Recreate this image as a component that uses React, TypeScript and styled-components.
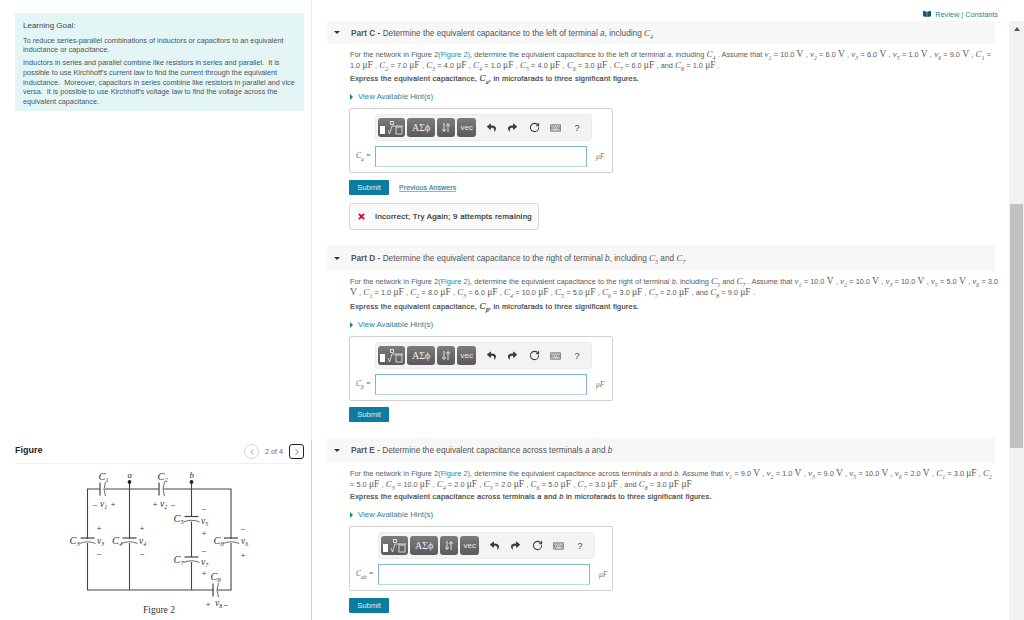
import * as React from "react";
import styled, { createGlobalStyle } from "styled-components";
import { FaBookOpen, FaKeyboard, FaReply, FaShare, FaTimes } from "react-icons/fa";
import { ChevronLeft, ChevronRight, RotateCw } from "lucide-react";

const GlobalStyle = createGlobalStyle`
  html, body {
    margin: 0;
    padding: 0;
    height: 620px;
    overflow: hidden;
    background: #fff;
    font-family: "Liberation Sans", Arial, sans-serif;
    color: #444;
  }
  * { box-sizing: border-box; }
`;

const Page = styled.div`
  display: flex;
  width: 1024px;
  height: 620px;
  overflow: hidden;
`;

const LeftColumn = styled.aside`
  display: flex;
  flex-direction: column;
  width: 312px;
  flex: none;
`;

const GoalPane = styled.div`
  flex: 1;
  padding: 13px 7px 0 15px;
  border-right: 1px solid #ececec;
`;

const GoalBox = styled.section`
  height: 98px;
  padding: 8px 8px;
  background: #e4f5f6;
  font-size: 7.28px;
  line-height: 9.7px;
  color: #4a5660;
`;

const GoalTitle = styled.div`
  color: #3c4650;
  font-size: 8px;
  margin-bottom: 5px;
`;

const GoalText = styled.p`
  margin: 0 0 3px;
  white-space: nowrap;
`;

const FigurePane = styled.div`
  height: 180px;
  padding: 0 7px 0 15px;
  border-right: 1px solid #cfd3d8;
`;

const FigureHead = styled.div`
  display: flex;
  align-items: center;
  height: 24px;
  border-bottom: 1px solid #f0f0f0;
`;

const FigureLabel = styled.div`
  flex: 1;
  margin-top: -4px;
  font-size: 9px;
  font-weight: 700;
  color: #222;
`;

const RoundButton = styled.div`
  display: flex;
  align-items: center;
  justify-content: center;
  width: 15px;
  height: 15px;
  border: 1px solid #d4d4d4;
  border-radius: 50%;
  color: #8a8a9a;
`;

const PageCount = styled.span`
  margin: 0 6px;
  font-size: 7.2px;
  color: #666;
`;

const NextButton = styled.div`
  display: flex;
  align-items: center;
  justify-content: center;
  width: 15px;
  height: 15px;
  border: 1.5px solid #222;
  border-radius: 3px;
  color: #555;
`;

const FigureBody = styled.div`
  display: flex;
  flex-direction: column;
  align-items: center;
  margin: 4px 0 0 -1px;
`;

const Caption = styled.div`
  margin-top: -5px;
  font-family: "Liberation Serif", serif;
  font-size: 9.5px;
  color: #333;
`;

const Main = styled.main`
  width: 668px;
  margin-left: 15px;
  flex: none;
`;

const TopLinks = styled.div`
  display: flex;
  align-items: center;
  justify-content: flex-end;
  gap: 4px;
  height: 21px;
  padding-top: 7px;
  margin-right: -3px;
  font-size: 7.3px;
  color: #2f7f93;
`;

const PartHeader = styled.div<{ $h: number }>`
  display: flex;
  align-items: center;
  height: ${(p) => p.$h}px;
  background: #f7f7f7;
  font-size: 8.25px;
  color: #555;
`;

const Caret = styled.span`
  width: 0;
  height: 0;
  margin: 0 11px 0 7px;
  border-left: 3px solid transparent;
  border-right: 3px solid transparent;
  border-top: 3.5px solid #333;
`;

const PartBody = styled.div<{ $bottom: number }>`
  padding: 5px 0 0 23px;
  margin-bottom: ${(p) => p.$bottom}px;
`;

const Line = styled.div`
  height: 11px;
  line-height: 11px;
  font-size: 7.3px;
  word-spacing: 0.2px;
  white-space: nowrap;
  color: #5a5a5a;
`;

const FigLink = styled.span`
  color: #2b86a8;
`;

const Express = styled.div<{ $top: number }>`
  height: 11px;
  margin-top: ${(p) => p.$top}px;
  line-height: 11px;
  font-size: 7.4px;
  letter-spacing: 0.25px;
  white-space: nowrap;
  color: #444;
  -webkit-text-stroke: 0.2px #444;
`;

const HintLink = styled.div`
  display: flex;
  align-items: center;
  height: 11px;
  margin-top: 7px;
  font-size: 7.8px;
  color: #1f7f9c;
`;

const HintArrow = styled.span`
  width: 0;
  height: 0;
  margin-right: 5px;
  border-top: 3px solid transparent;
  border-bottom: 3px solid transparent;
  border-left: 3.5px solid #1f7f9c;
`;

const AnswerBox = styled.div`
  width: 264px;
  height: 65px;
  margin: 6px 0 0 -1px;
  padding-top: 5px;
  border: 1px solid #d2d2d2;
  border-radius: 2px;
`;

const Toolbar = styled.div<{ $left: number }>`
  display: flex;
  align-items: center;
  gap: 2px;
  width: 217px;
  height: 27px;
  margin-left: ${(p) => p.$left}px;
  padding-left: 2px;
  background: #f3f3f3;
  border: 1px solid #ececec;
  border-radius: 4px;
`;

const ToolButton = styled.div<{ $w: number; $serif?: boolean }>`
  display: flex;
  align-items: center;
  justify-content: center;
  width: ${(p) => p.$w}px;
  height: 19px;
  background: linear-gradient(#7c7c7c, #5a5a5a);
  border-radius: 3px;
  color: #eee;
  font-size: ${(p) => (p.$serif ? 10 : 8)}px;
  font-family: ${(p) => (p.$serif ? '"Liberation Serif", serif' : '"Liberation Sans", sans-serif')};
`;

const ToolIcon = styled.div<{ $w: number }>`
  display: flex;
  align-items: center;
  justify-content: center;
  flex: none;
  width: ${(p) => p.$w}px;
  color: #3d3d3d;
  font-size: 9px;
`;

const InputRow = styled.div`
  display: flex;
  align-items: center;
  height: 21px;
  margin-top: 5px;
`;

const SymbolLabel = styled.div<{ $w: number }>`
  width: ${(p) => p.$w}px;
  padding-left: 6px;
  font-family: "Liberation Serif", serif;
  font-style: italic;
  font-size: 7.5px;
  color: #666;
  white-space: nowrap;
  sub {
    font-size: 5.5px;
  }
`;

const AnswerField = styled.div`
  width: 212px;
  height: 21px;
  border: 1px solid #7db8c8;
  border-bottom-color: #b8dbe4;
  background: #fff;
`;

const Unit = styled.div`
  margin-left: 9px;
  font-family: "Liberation Serif", serif;
  font-style: italic;
  font-size: 7.5px;
  color: #777;
`;

const ActionRow = styled.div<{ $top: number }>`
  display: flex;
  align-items: center;
  margin: ${(p) => p.$top}px 0 0 -1px;
`;

const SubmitButton = styled.div`
  width: 40px;
  height: 15px;
  line-height: 15px;
  text-align: center;
  background: #0b7ea0;
  color: #dff0f5;
  border-radius: 1px;
  font-size: 7.6px;
`;

const PreviousLink = styled.span`
  margin-left: 10px;
  font-size: 7px;
  letter-spacing: 0.1px;
  color: #1f7f9c;
  border-bottom: 1px solid #7fb8cb;
  -webkit-text-stroke: 0.15px #1f7f9c;
`;

const Feedback = styled.div`
  display: flex;
  align-items: center;
  gap: 9px;
  width: 190px;
  height: 27px;
  margin: 8px 0 0 -1px;
  padding-left: 7px;
  background: #fafafa;
  border: 1px solid #d8d8d8;
  border-radius: 3px;
  font-size: 7.8px;
  letter-spacing: 0.3px;
  white-space: nowrap;
  color: #333;
  -webkit-text-stroke: 0.2px #333;
  svg {
    color: #d4002a;
    font-size: 9px;
    flex: none;
  }
`;

const ScrollRail = styled.div`
  width: 15px;
  height: 599px;
  margin: 21px 0 0 14px;
  padding: 6px 1px 0;
  flex: none;
  background: #f1f1f1;
`;

const ScrollArrow = styled.div`
  width: 0;
  height: 0;
  margin: 0 auto;
  border-left: 3px solid transparent;
  border-right: 3px solid transparent;
  border-bottom: 4px solid #555;
`;

const ScrollThumb = styled.div`
  width: 13px;
  height: 244px;
  margin-top: 173px;
  background: #c1c1c1;
`;

const Var = styled.i`
  font-family: "Liberation Serif", serif;
  font-size: 9px;
  sub {
    font-size: 5.8px;
    line-height: 0;
  }
`;

const Roman = styled.span`
  font-family: "Liberation Serif", serif;
  font-size: 9.5px;
`;

const C = ({ n }: { n: React.ReactNode }) => (
  <Var>
    C<sub>{n}</sub>
  </Var>
);

const Vo = ({ n, val }: { n: number; val: string }) => (
  <>
    <Var>
      v<sub>{n}</sub>
    </Var>{" "}
    = {val} <Roman>V</Roman>
  </>
);

const Cap = ({ n, val }: { n: number; val: string }) => (
  <>
    <C n={n} /> = {val} <Roman>μF</Roman>
  </>
);

const TemplateGlyph = () => (
  <svg width="26" height="14" viewBox="0 0 26 14" fill="none" stroke="#eee" strokeWidth="0.8">
    <rect x="1" y="5" width="5" height="8" fill="#fff" stroke="none" />
    <rect x="11.5" y="0.5" width="3" height="3" />
    <path d="M9 9l1.5 4 2.5-8h11" />
    <rect x="17" y="6" width="6" height="7" />
  </svg>
);

const SortGlyph = () => (
  <svg width="10" height="11" viewBox="0 0 10 11" fill="none" stroke="#e4e4e4" strokeWidth="1">
    <path d="M3 1v8M1.2 7.2L3 9.6l1.8-2.4M7 10V2M5.2 3.8L7 1.4l1.8 2.4" />
  </svg>
);

const AnswerTools = ({ left }: { left: number }) => (
  <Toolbar $left={left}>
    <ToolButton $w={28}>
      <TemplateGlyph />
    </ToolButton>
    <ToolButton $w={28} $serif>
      ΑΣϕ
    </ToolButton>
    <ToolButton $w={19}>
      <SortGlyph />
    </ToolButton>
    <ToolButton $w={19}>vec</ToolButton>
    <ToolIcon $w={26}>
      <FaReply />
    </ToolIcon>
    <ToolIcon $w={12}>
      <FaShare />
    </ToolIcon>
    <ToolIcon $w={28}>
      <RotateCw size={11} strokeWidth={2.2} />
    </ToolIcon>
    <ToolIcon $w={11}>
      <FaKeyboard color="#8a8a8a" size={12} />
    </ToolIcon>
    <ToolIcon $w={28}>?</ToolIcon>
  </Toolbar>
);

const CircuitFigure = () => {
  const wire = "#444";
  const vPlate = (x: number, y: number) => (
    <>
      <path d={`M${x} ${y - 6.5}v13`} stroke={wire} strokeWidth="1.2" />
      <path d={`M${x + 5.5} ${y - 7}q-3 7 0 14`} stroke={wire} strokeWidth="0.8" fill="none" />
    </>
  );
  const hPlate = (x: number, y: number) => (
    <>
      <path d={`M${x - 7} ${y}h14`} stroke={wire} strokeWidth="1.2" />
      <path d={`M${x - 8} ${y + 5.5}q8 -3.5 16 0`} stroke={wire} strokeWidth="0.8" fill="none" />
    </>
  );
  const name = (x: number, y: number, n: number) => (
    <text x={x} y={y} fontFamily="Liberation Serif" fontStyle="italic" fontSize="10.5" fill="#333">
      C<tspan fontSize="6.5" dy="1.5">{n}</tspan>
    </text>
  );
  const volt = (x: number, y: number, n: number) => (
    <text x={x} y={y} fontFamily="Liberation Serif" fontStyle="italic" fontSize="9.5" fill="#333">
      v<tspan fontSize="6" dy="1.5">{n}</tspan>
    </text>
  );
  const sign = (x: number, y: number, s: string) => (
    <text x={x} y={y} textAnchor="middle" fontFamily="Liberation Sans" fontSize="8" fill="#444">
      {s}
    </text>
  );
  return (
    <svg width="200" height="142" viewBox="0 -6 200 142">
      <path
        d="M41 15H28.5V116H172V15H104M100 15H46M70.5 8V116M132.5 8V42.5M132.5 47.5V83M132.5 88V116"
        fill="none"
        stroke={wire}
        strokeWidth="1.1"
      />
      {/* gaps under the plates */}
      <g fill="#fff" stroke="none">
        <rect x="42" y="12" width="3.5" height="6" />
        <rect x="101" y="12" width="3.5" height="6" />
        <rect x="155" y="113" width="3.5" height="6" />
        <rect x="26" y="65" width="5" height="4" />
        <rect x="68" y="65" width="5" height="4" />
        <rect x="130" y="43" width="5" height="4" />
        <rect x="130" y="84" width="5" height="4" />
        <rect x="169.5" y="65" width="5" height="4" />
      </g>
      <circle cx="70.5" cy="8" r="1.9" fill="#222" />
      <circle cx="132.5" cy="8" r="1.9" fill="#222" />
      {vPlate(41, 15)}
      {vPlate(100, 15)}
      {vPlate(154, 116)}
      {hPlate(28.5, 64)}
      {hPlate(70.5, 64)}
      {hPlate(132.5, 42.5)}
      {hPlate(132.5, 83)}
      {hPlate(172, 64)}

      {name(39.5, 6, 1)}
      {name(98.5, 6, 2)}
      {name(10.5, 70, 3)}
      {name(53, 70, 4)}
      {name(114.5, 48, 5)}
      {name(154.5, 70, 6)}
      {name(114.5, 89, 7)}
      {name(151.5, 106, 8)}
      <text x="68.5" y="4" fontFamily="Liberation Serif" fontStyle="italic" fontSize="9" fill="#333">a</text>
      <text x="130.5" y="4" fontFamily="Liberation Serif" fontStyle="italic" fontSize="9" fill="#333">b</text>

      {volt(41, 33, 1)}
      {volt(101, 33, 2)}
      {volt(38, 70, 3)}
      {volt(80, 70, 4)}
      {volt(142, 50, 5)}
      {volt(182, 70, 6)}
      {volt(142, 91, 7)}
      {volt(156, 132, 8)}

      {sign(36, 33, "–")}
      {sign(54, 33, "+")}
      {sign(96, 33, "+")}
      {sign(114, 33, "–")}
      {sign(40, 57, "+")}
      {sign(40, 82, "–")}
      {sign(83, 57, "+")}
      {sign(83, 82, "–")}
      {sign(145, 37, "–")}
      {sign(145, 62, "+")}
      {sign(145, 79, "–")}
      {sign(145, 102, "+")}
      {sign(184, 57, "–")}
      {sign(184, 84, "+")}
      {sign(149, 133, "+")}
      {sign(167, 133, "–")}
    </svg>
  );
};

const App = () => {
  return (
    <Page>
      <GlobalStyle />
      <LeftColumn>
        <GoalPane>
          <GoalBox>
            <GoalTitle>Learning Goal:</GoalTitle>
            <GoalText>
              To reduce series-parallel combinations of inductors or capacitors to an equivalent
              <br />
              inductance or capacitance.
            </GoalText>
            <GoalText>
              Inductors in series and parallel combine like resistors in series and parallel.&nbsp; It is
              <br />
              possible to use Kirchhoff's current law to find the current through the equivalent
              <br />
              inductance.&nbsp; Moreover, capacitors in series combine like resistors in parallel and vice
              <br />
              versa.&nbsp; It is possible to use Kirchhoff's voltage law to find the voltage across the
              <br />
              equivalent capacitance.
            </GoalText>
          </GoalBox>
        </GoalPane>
        <FigurePane>
          <FigureHead>
            <FigureLabel>Figure</FigureLabel>
            <RoundButton>
              <ChevronLeft size={10} />
            </RoundButton>
            <PageCount>2 of 4</PageCount>
            <NextButton>
              <ChevronRight size={10} />
            </NextButton>
          </FigureHead>
          <FigureBody>
            <CircuitFigure />
            <Caption>Figure 2</Caption>
          </FigureBody>
        </FigurePane>
      </LeftColumn>

      <Main>
        <TopLinks>
          <FaBookOpen size={8} color="#14566b" />
          <span>Review | Constants</span>
        </TopLinks>

        <PartHeader $h={23}>
          <Caret />
          <span>
            <b>Part C - </b>Determine the equivalent capacitance to the left of terminal <i>a</i>, including <C n={4} />
          </span>
        </PartHeader>
        <PartBody $bottom={15}>
          <Line>
            For the network in Figure 2<FigLink>(Figure 2)</FigLink>, determine the equivalent capacitance to the left of terminal <i>a</i>, including <C n={4} /> . Assume that <Vo n={1} val="10.0" /> , <Vo n={2} val="6.0" /> , <Vo n={3} val="6.0" /> , <Vo n={5} val="1.0" /> , <Vo n={6} val="9.0" /> , <C n={1} /> =
          </Line>
          <Line>
            1.0 <Roman>μF</Roman> , <Cap n={2} val="7.0" /> , <Cap n={3} val="4.0" /> , <Cap n={4} val="1.0" /> , <Cap n={5} val="4.0" /> , <Cap n={6} val="3.0" /> , <Cap n={7} val="6.0" /> , and <Cap n={8} val="1.0" /> .
          </Line>
          <Express $top={2}>
            Express the equivalent capacitance, <C n="a" />, in microfarads to three significant figures.
          </Express>
          <HintLink>
            <HintArrow />
            View Available Hint(s)
          </HintLink>
          <AnswerBox>
            <AnswerTools left={25} />
            <InputRow>
              <SymbolLabel $w={25}>
                C<sub>a</sub> =
              </SymbolLabel>
              <AnswerField />
              <Unit>μF</Unit>
            </InputRow>
          </AnswerBox>
          <ActionRow $top={7}>
            <SubmitButton>Submit</SubmitButton>
            <PreviousLink>Previous Answers</PreviousLink>
          </ActionRow>
          <Feedback>
            <FaTimes />
            Incorrect; Try Again; 9 attempts remaining
          </Feedback>
        </PartBody>

        <PartHeader $h={26}>
          <Caret />
          <span>
            <b>Part D - </b>Determine the equivalent capacitance to the right of terminal <i>b</i>, including <C n={5} /> and <C n={7} />
          </span>
        </PartHeader>
        <PartBody $bottom={16}>
          <Line>
            For the network in Figure 2<FigLink>(Figure 2)</FigLink>, determine the equivalent capacitance to the right of terminal <i>b</i>, including <C n={5} /> and <C n={7} /> . Assume that <Vo n={1} val="10.0" /> , <Vo n={2} val="10.0" /> , <Vo n={3} val="10.0" /> , <Vo n={5} val="5.0" /> , <Var>v<sub>6</sub></Var> = 3.0
          </Line>
          <Line>
            <Roman>V</Roman> , <Cap n={1} val="1.0" /> , <Cap n={2} val="8.0" /> , <Cap n={3} val="6.0" /> , <Cap n={4} val="10.0" /> , <Cap n={5} val="5.0" /> , <Cap n={6} val="3.0" /> , <Cap n={7} val="2.0" /> , and <Cap n={8} val="9.0" /> .
          </Line>
          <Express $top={3}>
            Express the equivalent capacitance, <C n="β" />, in microfarads to three significant figures.
          </Express>
          <HintLink>
            <HintArrow />
            View Available Hint(s)
          </HintLink>
          <AnswerBox>
            <AnswerTools left={25} />
            <InputRow>
              <SymbolLabel $w={25}>
                C<sub>β</sub> =
              </SymbolLabel>
              <AnswerField />
              <Unit>μF</Unit>
            </InputRow>
          </AnswerBox>
          <ActionRow $top={6}>
            <SubmitButton>Submit</SubmitButton>
          </ActionRow>
        </PartBody>

        <PartHeader $h={25}>
          <Caret />
          <span>
            <b>Part E - </b>Determine the equivalent capacitance across terminals <i>a</i> and <i>b</i>
          </span>
        </PartHeader>
        <PartBody $bottom={0}>
          <Line>
            For the network in Figure 2<FigLink>(Figure 2)</FigLink>, determine the equivalent capacitance across terminals <i>a</i> and <i>b</i>. Assume that <Vo n={1} val="9.0" /> , <Vo n={2} val="1.0" /> , <Vo n={3} val="9.0" /> , <Vo n={5} val="10.0" /> , <Vo n={6} val="2.0" /> , <Cap n={1} val="3.0" /> , <C n={2} />
          </Line>
          <Line>
            = 5.0 <Roman>μF</Roman> , <Cap n={3} val="10.0" /> , <Cap n={4} val="2.0" /> , <Cap n={5} val="2.0" /> , <Cap n={6} val="5.0" /> , <Cap n={7} val="3.0" /> , and <Cap n={8} val="3.0" /> <Roman>μF</Roman>
          </Line>
          <Express $top={1}>
            Express the equivalent capacitance across terminals <i>a</i> and <i>b</i> in microfarads to three significant figures.
          </Express>
          <HintLink>
            <HintArrow />
            View Available Hint(s)
          </HintLink>
          <AnswerBox>
            <AnswerTools left={28} />
            <InputRow>
              <SymbolLabel $w={28}>
                C<sub>ab</sub> =
              </SymbolLabel>
              <AnswerField />
              <Unit>μF</Unit>
            </InputRow>
          </AnswerBox>
          <ActionRow $top={7}>
            <SubmitButton>Submit</SubmitButton>
          </ActionRow>
        </PartBody>
      </Main>

      <ScrollRail>
        <ScrollArrow />
        <ScrollThumb />
      </ScrollRail>
    </Page>
  );
};

export default App;
